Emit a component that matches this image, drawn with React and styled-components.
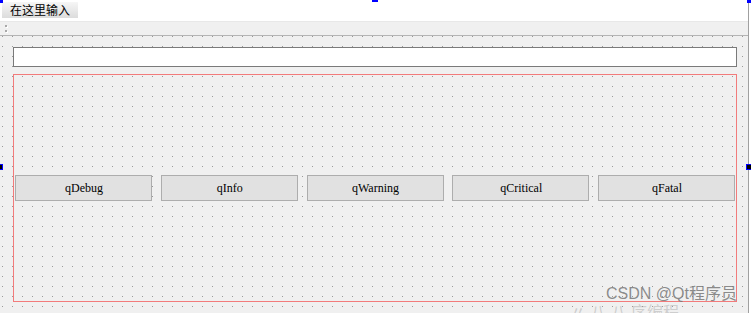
import React from 'react';
import styled, { createGlobalStyle } from 'styled-components';

const Global = createGlobalStyle`
  html, body { margin: 0; padding: 0; background: #ffffff; }
  body { font-family: "Liberation Sans", "Noto Sans CJK SC", sans-serif; }
`;

const Stage = styled.div`
  position: relative;
  width: 751px;
  height: 313px;
  overflow: hidden;
  background: #ffffff;
`;

const Window = styled.div`
  width: 748px;
  height: 313px;
  border-right: 1px solid #a0a0a0;
  display: flex;
  flex-direction: column;
`;

const MenuBar = styled.div`
  height: 19px;
  flex: none;
  background: #ffffff;
  border-bottom: 1px solid #e8e8e8;
  padding: 2px 0 0 2px;
  display: flex;
  align-items: flex-start;
`;

const MenuItem = styled.div`
  height: 16px;
  padding: 0 8px;
  font-family: "Noto Sans CJK SC", sans-serif;
  font-size: 12px;
  line-height: 16px;
  color: #000;
  background: linear-gradient(to bottom, #f6f6f6 0%, #e9e9e9 50%, #dcdcdc 100%);
`;

const ToolBar = styled.div`
  height: 13px;
  flex: none;
  background: #f0f0f0;
  display: flex;
  align-items: center;
  padding-left: 5px;
`;

const Gripper = styled.div`
  display: flex;
  flex-direction: column;
  gap: 3px;
  & > span {
    width: 2px;
    height: 2px;
    background: #a8a8a8;
    box-shadow: 1px 1px 0 #ffffff;
  }
`;

const Form = styled.div`
  flex: 1;
  min-height: 0;
  border-top: 1px solid #b4b4b4;
  background-color: #f0f0f0;
  background-image: conic-gradient(at 1px 1px, transparent 270deg, #9a9a9a 0);
  background-size: 10px 10px;
  background-position: 2px 0;
  padding: 11px 11px 11px 13px;
  display: flex;
  flex-direction: column;
  gap: 7px;
`;

const LineEdit = styled.div`
  height: 20px;
  flex: none;
  box-sizing: border-box;
  border: 1px solid #7a7a7a;
  background: #ffffff;
`;

const Frame = styled.div`
  flex: 1;
  border: 1px solid #f27b7b;
  padding: 0 1px;
  display: flex;
  align-items: center;
  gap: 8.75px;
`;

const Button = styled.div`
  flex: 1;
  height: 26px;
  box-sizing: border-box;
  border: 1px solid #adadad;
  background: #e1e1e1;
  display: flex;
  align-items: center;
  justify-content: center;
  font-family: "Liberation Serif", serif;
  font-size: 12px;
  color: #000;
  padding-left: 1px;
`;

const Handle = styled.div`
  position: absolute;
  box-sizing: border-box;
  width: 6px;
  height: 6px;
  border: 1px solid #0000ff;
  background: ${p => (p.$solid ? '#0000ff' : '#000000')};
  left: ${p => p.$x}px;
  top: ${p => p.$y}px;
`;

const Watermark = styled.div`
  position: absolute;
  left: ${p => p.$x}px;
  top: ${p => p.$y}px;
  font-family: "Liberation Sans", "Noto Sans CJK SC", sans-serif;
  font-size: ${p => p.$size}px;
  line-height: 1.2;
  color: ${p => p.$color};
  white-space: nowrap;
  pointer-events: none;
`;

const labels = ['qDebug', 'qInfo', 'qWarning', 'qCritical', 'qFatal'];

export default function App() {
  return (
    <Stage>
      <Global />
      <Window>
        <MenuBar>
          <MenuItem>在这里输入</MenuItem>
        </MenuBar>
        <ToolBar>
          <Gripper>
            <span />
            <span />
          </Gripper>
        </ToolBar>
        <Form>
          <LineEdit />
          <Frame>
            {labels.map(l => (
              <Button key={l}>{l}</Button>
            ))}
          </Frame>
        </Form>
      </Window>
      <Handle $x={-3} $y={-3} $solid />
      <Handle $x={372} $y={-4} $solid />
      <Handle $x={747} $y={-3} $solid />
      <Handle $x={-3} $y={164} />
      <Handle $x={746} $y={164} />
      <Watermark $x={606} $y={284} $size={16} $color="rgba(120,120,120,0.85)">CSDN @Qt程序员</Watermark>
      <Watermark $x={560} $y={303} $size={16} $color="rgba(150,150,150,0.4)">- 〃 八 八 序编程</Watermark>
    </Stage>
  );
}
